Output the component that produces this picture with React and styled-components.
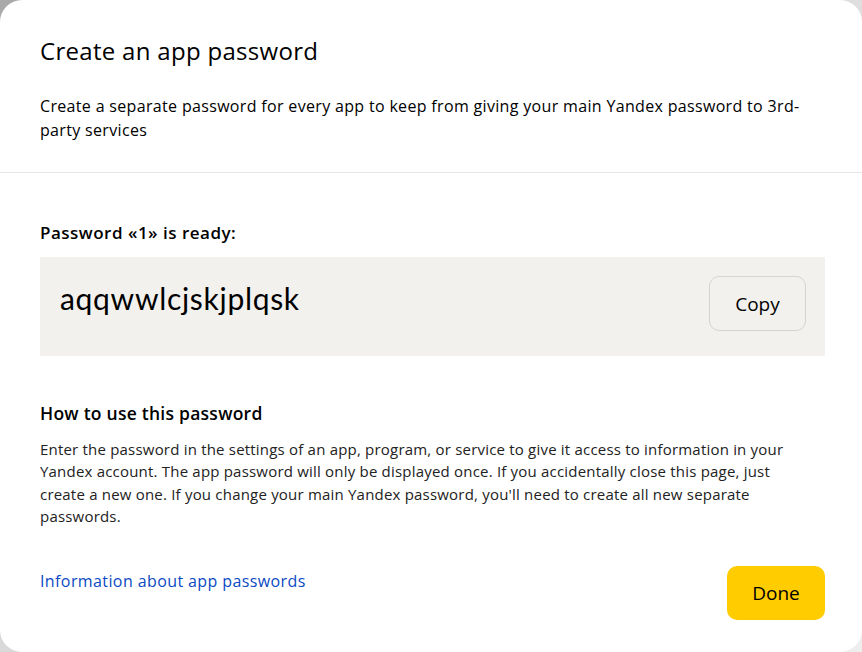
import React from 'react';
import styled, { createGlobalStyle } from 'styled-components';

const GlobalStyle = createGlobalStyle`
  html, body {
    margin: 0;
    padding: 0;
  }
  body {
    background: linear-gradient(135deg, #a9a9a9 0%, #d8d8d8 40%, #eeeeee 100%);
    font-family: "Open Sans", "Noto Sans", sans-serif;
    color: #000;
  }
`;

const Card = styled.div`
  width: 862px;
  height: 652px;
  box-sizing: border-box;
  background: #fff;
  border-radius: 22px;
  overflow: hidden;
  display: flex;
  flex-direction: column;
`;

const Header = styled.div`
  padding: 36px 40px 30px;
  border-bottom: 1px solid #e6e6e6;
`;

const Title = styled.h1`
  margin: 0 0 28px;
  font-size: 24px;
  font-weight: 400;
  letter-spacing: 0.3px;
  line-height: 30px;
`;

const Lead = styled.p`
  margin: 0;
  font-size: 16px;
  letter-spacing: 0.33px;
  line-height: 24px;
`;

const Body = styled.div`
  flex: 1;
  padding: 48px 37px 32px 40px;
  display: flex;
  flex-direction: column;
`;

const Label = styled.div`
  font-size: 17px;
  font-weight: 600;
  letter-spacing: 0.5px;
  line-height: 24px;
  margin-bottom: 12px;
`;

const PasswordBox = styled.div`
  height: 99px;
  background: #f2f1ee;
  display: flex;
  align-items: center;
  justify-content: space-between;
  padding: 0 19px 0 20px;
  box-sizing: border-box;
`;

const Secret = styled.span`
  font-family: "Lato", sans-serif;
  font-size: 30px;
  letter-spacing: 0.7px;
  margin-top: -18px;
`;

const Button = styled.button`
  font-family: "Open Sans", sans-serif;
  font-size: 19px;
  color: #000;
  border-radius: 10px;
  cursor: pointer;
  box-sizing: border-box;
  width: ${(p) => p.width}px;
  height: ${(p) => p.height}px;
  background: ${(p) => (p.primary ? '#ffcc00' : 'transparent')};
  border: ${(p) => (p.primary ? 'none' : '1px solid #d6d4d0')};
  margin-top: ${(p) => p.offset || 0}px;
`;

const SubTitle = styled.h2`
  margin: 45px 0 13px;
  font-size: 17.5px;
  font-weight: 600;
  letter-spacing: 0.25px;
  line-height: 24px;
`;

const Text = styled.p`
  margin: 0;
  max-width: 760px;
  font-size: 15px;
  letter-spacing: 0.2px;
  line-height: 22.4px;
  color: #222;
`;

const Footer = styled.div`
  margin-top: auto;
  display: flex;
  justify-content: space-between;
  align-items: flex-start;
`;

const Link = styled.a`
  font-size: 16px;
  letter-spacing: 0.4px;
  line-height: 24px;
  color: #0b4ac4;
  text-decoration: none;
  margin-top: 3px;
`;

export default function App() {
  return (
    <>
      <GlobalStyle />
      <Card>
        <Header>
          <Title>Create an app password</Title>
          <Lead>
            Create a separate password for every app to keep from giving your main Yandex password to 3rd-party services
          </Lead>
        </Header>
        <Body>
          <Label>Password «1» is ready:</Label>
          <PasswordBox>
            <Secret>aqqwwlcjskjplqsk</Secret>
            <Button width={97} height={55} offset={-6}>Copy</Button>
          </PasswordBox>
          <SubTitle>How to use this password</SubTitle>
          <Text>
            Enter the password in the settings of an app, program, or service to give it access to information in your
            Yandex account. The app password will only be displayed once. If you accidentally close this page, just
            create a new one. If you change your main Yandex password, you'll need to create all new separate
            passwords.
          </Text>
          <Footer>
            <Link href="#">Information about app passwords</Link>
            <Button primary width={98} height={54}>Done</Button>
          </Footer>
        </Body>
      </Card>
    </>
  );
}
